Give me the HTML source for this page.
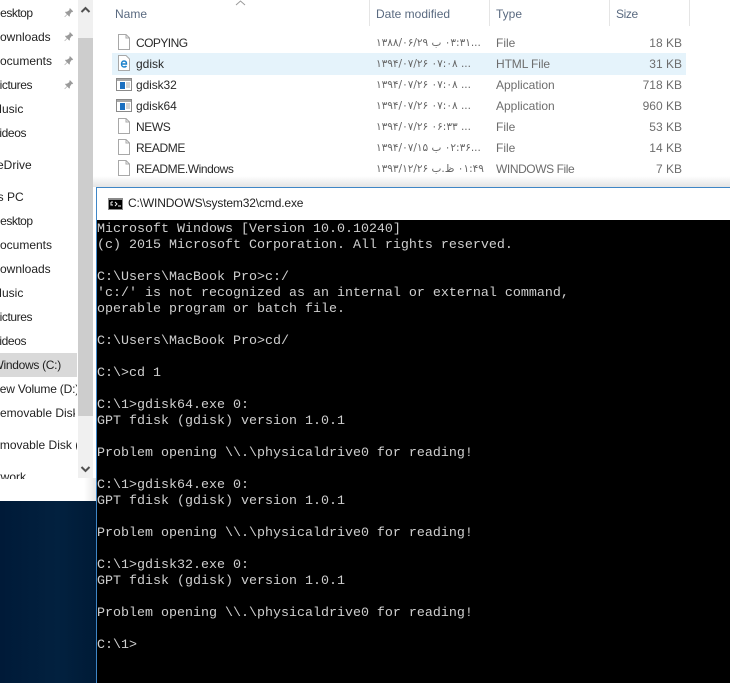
<!DOCTYPE html>
<html><head><meta charset="utf-8">
<style>
html,body{margin:0;padding:0;}
body{width:730px;height:683px;position:relative;overflow:hidden;background:#fff;font-family:"Liberation Sans",sans-serif;font-size:12px;color:#222;}
.a{position:absolute;white-space:nowrap;}
.navl{position:absolute;white-space:nowrap;font-size:12px;color:#222;line-height:16px;}
.f{position:absolute;left:136px;line-height:16px;color:#2a2a2a;font-size:12px;white-space:nowrap;}
.d{position:absolute;left:376px;line-height:16px;color:#666;font-size:10.5px;font-family:"DejaVu Sans",sans-serif;direction:ltr;unicode-bidi:bidi-override;white-space:nowrap;}
.t{position:absolute;left:496px;line-height:16px;color:#6d6d6d;font-size:12px;white-space:nowrap;}
.s{position:absolute;right:48px;line-height:16px;color:#6d6d6d;font-size:12px;white-space:nowrap;}
.h{position:absolute;top:6px;line-height:16px;color:#5a6a80;font-size:12px;}
pre{position:absolute;left:97px;top:222px;margin:0;font-family:"Liberation Mono",monospace;font-size:13.333px;line-height:16px;color:#cfcfcf;}
svg{position:absolute;}
</style></head><body>

<!-- desktop background -->
<div class="a" style="left:0;top:501px;width:97px;height:182px;background:linear-gradient(90deg,#001a38,#02213f 60%,#001a36);"></div>
<div class="a" style="left:84px;top:478px;width:12px;height:23px;background:linear-gradient(90deg,#fff,#e6e6e6);"></div>

<!-- explorer nav pane -->
<div class="a" style="left:0;top:353px;width:77px;height:24px;background:#d9d9d9;"></div>
<div class="navl" style="left:-8px;top:5px;letter-spacing:-.5px">Desktop</div>
<div class="navl" style="left:-8.7px;top:29px">Downloads</div>
<div class="navl" style="left:-8.7px;top:53px">Documents</div>
<div class="navl" style="left:-8px;top:77px;letter-spacing:-.4px">Pictures</div>
<div class="navl" style="left:-8px;top:101px">Music</div>
<div class="navl" style="left:-8px;top:125px;letter-spacing:-.4px">Videos</div>
<div class="navl" style="left:-19px;top:157px">OneDrive</div>
<div class="navl" style="left:-19px;top:189px">This PC</div>
<div class="navl" style="left:-8px;top:213px;letter-spacing:-.5px">Desktop</div>
<div class="navl" style="left:-8.7px;top:237px">Documents</div>
<div class="navl" style="left:-8.7px;top:261px">Downloads</div>
<div class="navl" style="left:-8px;top:285px">Music</div>
<div class="navl" style="left:-8px;top:309px;letter-spacing:-.4px">Pictures</div>
<div class="navl" style="left:-8px;top:333px;letter-spacing:-.4px">Videos</div>
<div class="navl" style="left:-7.5px;top:357px;letter-spacing:-.3px">Windows (C:)</div>
<div class="navl" style="left:-8.7px;top:381px;width:85.7px;overflow:hidden;letter-spacing:-.2px">New Volume (D:)</div>
<div class="navl" style="left:-8.7px;top:405px;width:84px;overflow:hidden">Removable Disk (E:)</div>
<div class="navl" style="left:-15.5px;top:437px;width:92.5px;overflow:hidden">Removable Disk (G:)</div>
<div class="a" style="left:0;top:469px;width:77px;height:10px;overflow:hidden;"><div class="navl" style="left:-18px;top:0">Network</div></div>

<!-- pins -->
<svg style="left:64px;top:7px" width="10" height="12" viewBox="0 0 12 14" fill="#9a9a9a"><path d="M7 1l4 4-1 1-1 0-2 3 0 2-1 0-2-2-3 3-.5-.5 3-3-2-2 0-1 2 0 3-2 0-1z"/></svg>
<svg style="left:64px;top:31px" width="10" height="12" viewBox="0 0 12 14" fill="#9a9a9a"><path d="M7 1l4 4-1 1-1 0-2 3 0 2-1 0-2-2-3 3-.5-.5 3-3-2-2 0-1 2 0 3-2 0-1z"/></svg>
<svg style="left:64px;top:55px" width="10" height="12" viewBox="0 0 12 14" fill="#9a9a9a"><path d="M7 1l4 4-1 1-1 0-2 3 0 2-1 0-2-2-3 3-.5-.5 3-3-2-2 0-1 2 0 3-2 0-1z"/></svg>
<svg style="left:64px;top:79px" width="10" height="12" viewBox="0 0 12 14" fill="#9a9a9a"><path d="M7 1l4 4-1 1-1 0-2 3 0 2-1 0-2-2-3 3-.5-.5 3-3-2-2 0-1 2 0 3-2 0-1z"/></svg>

<!-- nav scrollbar -->
<div class="a" style="left:78px;top:0;width:15px;height:478px;background:#f0f0f0;"></div>
<div class="a" style="left:78px;top:38px;width:15px;height:378px;background:#cdcdcd;"></div>
<svg style="left:80px;top:6px" width="11" height="8" viewBox="0 0 11 8"><path d="M1.5 6L5.5 2 9.5 6" fill="none" stroke="#505050" stroke-width="2"/></svg>
<svg style="left:80px;top:465px" width="11" height="8" viewBox="0 0 11 8"><path d="M1.5 2L5.5 6 9.5 2" fill="none" stroke="#505050" stroke-width="2"/></svg>

<!-- header -->
<svg style="left:235px;top:0" width="11" height="6" viewBox="0 0 11 6"><path d="M1 5L5.5 1 10 5" fill="none" stroke="#9a9a9a" stroke-width="1"/></svg>
<div class="h" style="left:115px">Name</div>
<div class="h" style="left:376px">Date modified</div>
<div class="h" style="left:496px">Type</div>
<div class="h" style="left:616px;letter-spacing:-.4px">Size</div>
<div class="a" style="left:369px;top:0;width:1px;height:26px;background:#e5e5e5;"></div>
<div class="a" style="left:489px;top:0;width:1px;height:26px;background:#e5e5e5;"></div>
<div class="a" style="left:609px;top:0;width:1px;height:26px;background:#e5e5e5;"></div>
<div class="a" style="left:689px;top:0;width:1px;height:26px;background:#e5e5e5;"></div>

<!-- selected row -->
<div class="a" style="left:112px;top:53px;width:574px;height:22px;background:#e5f3fb;"></div>

<!-- file icons -->
<svg style="left:118px;top:34px" width="12" height="16" viewBox="0 0 12 16"><path d="M.5.5H8L11.5 4V15.5H.5Z" fill="#fff" stroke="#a8a8a8"/><path d="M8 .5V4H11.5" fill="none" stroke="#a8a8a8"/></svg>
<svg style="left:118px;top:55px" width="12" height="16" viewBox="0 0 12 16"><path d="M.5.5H8L11.5 4V15.5H.5Z" fill="#fff" stroke="#a8a8a8"/><path d="M3.5 9H8.5C8.5 7 7.5 6 6 6 4.5 6 3.5 7.2 3.5 9 3.5 10.8 4.6 12 6 12 7 12 8 11.6 8.5 11" fill="none" stroke="#1c82cc" stroke-width="1.4"/></svg>
<svg style="left:116px;top:78px" width="16" height="13" viewBox="0 0 16 13"><rect x=".5" y=".5" width="15" height="12" fill="#fff" stroke="#8a8a8a"/><rect x="1" y="1" width="14" height="2" fill="#a8a8a8"/><rect x="4" y="4" width="5" height="7" fill="#1a6fc0"/><path d="M10 5h4M10 7h4M10 9h4" stroke="#a8a8a8"/></svg>
<svg style="left:116px;top:99px" width="16" height="13" viewBox="0 0 16 13"><rect x=".5" y=".5" width="15" height="12" fill="#fff" stroke="#8a8a8a"/><rect x="1" y="1" width="14" height="2" fill="#a8a8a8"/><rect x="4" y="4" width="5" height="7" fill="#1a6fc0"/><path d="M10 5h4M10 7h4M10 9h4" stroke="#a8a8a8"/></svg>
<svg style="left:118px;top:118px" width="12" height="16" viewBox="0 0 12 16"><path d="M.5.5H8L11.5 4V15.5H.5Z" fill="#fff" stroke="#a8a8a8"/><path d="M8 .5V4H11.5" fill="none" stroke="#a8a8a8"/></svg>
<svg style="left:118px;top:139px" width="12" height="16" viewBox="0 0 12 16"><path d="M.5.5H8L11.5 4V15.5H.5Z" fill="#fff" stroke="#a8a8a8"/><path d="M8 .5V4H11.5" fill="none" stroke="#a8a8a8"/></svg>
<svg style="left:118px;top:160px" width="12" height="16" viewBox="0 0 12 16"><path d="M.5.5H8L11.5 4V15.5H.5Z" fill="#fff" stroke="#a8a8a8"/><path d="M8 .5V4H11.5" fill="none" stroke="#a8a8a8"/></svg>

<!-- rows -->
<div class="f" style="top:35px;letter-spacing:-.55px">COPYING</div><div class="d" style="top:35px">۱۳۸۸/۰۶/۲۹ ب ۰۳:۳۱...</div><div class="t" style="top:35px">File</div><div class="s" style="top:35px">18 KB</div>
<div class="f" style="top:56px">gdisk</div><div class="d" style="top:56px">۱۳۹۴/۰۷/۲۶ ۰۷:۰۸ ...</div><div class="t" style="top:56px;letter-spacing:-.1px">HTML File</div><div class="s" style="top:56px">31 KB</div>
<div class="f" style="top:77px;letter-spacing:-.1px">gdisk32</div><div class="d" style="top:77px">۱۳۹۴/۰۷/۲۶ ۰۷:۰۸ ...</div><div class="t" style="top:77px">Application</div><div class="s" style="top:77px">718 KB</div>
<div class="f" style="top:98px;letter-spacing:-.1px">gdisk64</div><div class="d" style="top:98px">۱۳۹۴/۰۷/۲۶ ۰۷:۰۸ ...</div><div class="t" style="top:98px">Application</div><div class="s" style="top:98px">960 KB</div>
<div class="f" style="top:119px;letter-spacing:-.4px">NEWS</div><div class="d" style="top:119px">۱۳۹۴/۰۷/۲۶ ۰۶:۳۳ ...</div><div class="t" style="top:119px">File</div><div class="s" style="top:119px">53 KB</div>
<div class="f" style="top:140px;letter-spacing:-.4px">README</div><div class="d" style="top:140px">۱۳۹۴/۰۷/۱۵ ب ۰۲:۳۶...</div><div class="t" style="top:140px">File</div><div class="s" style="top:140px">14 KB</div>
<div class="f" style="top:161px;letter-spacing:-.42px">README.Windows</div><div class="d" style="top:161px">۱۳۹۳/۱۲/۲۶ ب.ظ ۰۱:۴۹</div><div class="t" style="top:161px;letter-spacing:-.42px">WINDOWS File</div><div class="s" style="top:161px">7 KB</div>

<!-- cmd shadow -->
<div class="a" style="left:93px;top:176px;width:637px;height:11px;background:linear-gradient(#fff,#e4e4e4);"></div>

<!-- cmd window -->
<div class="a" style="left:96px;top:187px;width:634px;height:496px;background:#000;"></div>
<div class="a" style="left:96px;top:187px;width:1px;height:496px;background:#3f86c6;"></div>
<div class="a" style="left:96px;top:187px;width:634px;height:1px;background:#3f86c6;"></div>
<div class="a" style="left:97px;top:188px;width:633px;height:32px;background:#fff;"></div>
<svg style="left:108px;top:198px" width="15" height="12" viewBox="0 0 15 12"><rect width="15" height="12" fill="#8a8a8a"/><rect x="1" y="2" width="13" height="9" fill="#000"/><path d="M3 4h2M3 4v3h2M7 4l2 2-2 2M10 8h3" stroke="#eee" fill="none"/></svg>
<div class="a" style="left:128px;top:195px;line-height:16px;font-size:12px;color:#222;letter-spacing:-.15px;">C:\WINDOWS\system32\cmd.exe</div>
<pre>Microsoft Windows [Version 10.0.10240]
(c) 2015 Microsoft Corporation. All rights reserved.

C:\Users\MacBook Pro&gt;c:/
'c:/' is not recognized as an internal or external command,
operable program or batch file.

C:\Users\MacBook Pro&gt;cd/

C:\&gt;cd 1

C:\1&gt;gdisk64.exe 0:
GPT fdisk (gdisk) version 1.0.1

Problem opening \\.\physicaldrive0 for reading!

C:\1&gt;gdisk64.exe 0:
GPT fdisk (gdisk) version 1.0.1

Problem opening \\.\physicaldrive0 for reading!

C:\1&gt;gdisk32.exe 0:
GPT fdisk (gdisk) version 1.0.1

Problem opening \\.\physicaldrive0 for reading!

C:\1&gt;</pre>
</body></html>
